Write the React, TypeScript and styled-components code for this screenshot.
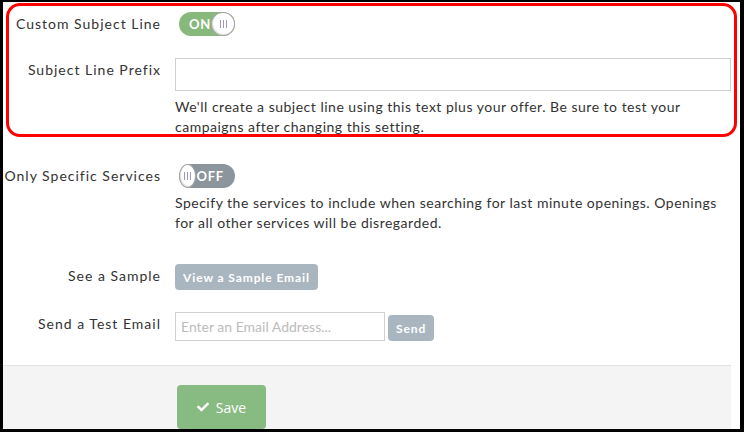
import React from 'react'
import styled, { createGlobalStyle } from 'styled-components'
import { FaCheck } from 'react-icons/fa'

const GlobalStyle = createGlobalStyle`
  html, body {
    margin: 0;
    padding: 0;
    background: #fff;
  }
  * {
    box-sizing: border-box;
  }
`

const Frame = styled.div`
  width: 744px;
  height: 432px;
  border-style: solid;
  border-color: #000;
  border-width: 2px 4px 3px 3px;
  background: #fff;
  padding-right: 9px;
  display: flex;
  flex-direction: column;
  overflow: hidden;
  font-family: Lato, "Noto Sans", sans-serif;
  color: #333;
`

const Highlight = styled.div`
  position: relative;
  padding-top: 10px;

  &::after {
    content: '';
    position: absolute;
    left: 3px;
    top: 1px;
    right: -6px;
    bottom: 0;
    border: 3px solid #f00;
    border-radius: 14px;
    pointer-events: none;
  }
`

const Row = styled.div<{ $top?: number }>`
  display: flex;
  align-items: flex-start;
  margin-top: ${p => p.$top ?? 0}px;
`

const Label = styled.div`
  width: 172px;
  flex-shrink: 0;
  padding-right: 14px;
  display: flex;
  justify-content: flex-end;
  white-space: nowrap;
  font-size: 14px;
  line-height: 24px;
  letter-spacing: 1px;
  color: #333;
`

const Control = styled.div<{ $row?: boolean }>`
  flex: 1;
  display: flex;
  flex-direction: ${p => (p.$row ? 'row' : 'column')};
  align-items: ${p => (p.$row ? 'flex-end' : 'stretch')};
  gap: ${p => (p.$row ? '3px' : '0')};
`

const Switch = styled.div<{ $on: boolean }>`
  width: 56px;
  height: 24px;
  margin-left: 4px;
  border-radius: 12px;
  background: ${p => (p.$on ? '#87b87c' : '#8b959b')};
  display: flex;
  align-items: center;
  flex-direction: ${p => (p.$on ? 'row' : 'row-reverse')};
  justify-content: ${p => (p.$on ? 'space-between' : 'flex-end')};
  padding-left: ${p => (p.$on ? '10px' : '0')};
  cursor: pointer;
`

const SwitchText = styled.span<{ $on: boolean }>`
  color: #fff;
  font-weight: 700;
  font-size: 13px;
  letter-spacing: 0.8px;
  margin-right: ${p => (p.$on ? '0' : '11px')};
`

const Knob = styled.span`
  width: 24px;
  height: 24px;
  border-radius: 50%;
  background: #fff;
  border: 1px solid rgba(0, 0, 0, 0.35);
  box-shadow: inset 1px -1px 1px rgba(0, 0, 0, 0.12);
  display: flex;
  align-items: center;
  justify-content: center;
  gap: 2px;
`

const Grip = styled.i`
  display: block;
  width: 1px;
  height: 8px;
  background: #9f9ab3;
`

const TextInput = styled.input<{ $w?: number; $h: number }>`
  width: ${p => (p.$w ? `${p.$w}px` : '100%')};
  height: ${p => p.$h}px;
  border: 1px solid #d0d0d0;
  border-radius: 0;
  padding: 0 5px;
  font-family: Lato, "Noto Sans", sans-serif;
  font-size: 14px;
  color: #333;
  outline: none;

  &::placeholder {
    color: #bcbcbc;
  }
`

const Help = styled.p<{ $top: number }>`
  margin: ${p => p.$top}px 0 0;
  font-size: 14px;
  line-height: 20px;
  letter-spacing: 0.5px;
  color: #333;
`

const GrayButton = styled.button`
  height: 26px;
  padding: 0 8px;
  border: none;
  border-radius: 4px;
  background: #a9b6bf;
  color: #fff;
  font-family: Lato, "Noto Sans", sans-serif;
  font-weight: 700;
  font-size: 12px;
  letter-spacing: 0.9px;
  cursor: pointer;
`

const Footer = styled.div`
  flex: 1;
  margin-top: 24px;
  border-top: 1px solid #e3e3e3;
  background: #f4f4f4;
  padding: 19px 0 0 174px;
`

const SaveButton = styled.button`
  width: 89px;
  height: 44px;
  border: none;
  border-radius: 4px;
  background: #88bb81;
  color: #fff;
  font-family: "Open Sans", Lato, sans-serif;
  font-size: 14px;
  display: flex;
  align-items: center;
  justify-content: center;
  gap: 7px;
  cursor: pointer;

  svg {
    width: 12px;
    height: 12px;
  }
`

const Toggle = ({ on }: { on: boolean }) => (
  <Switch $on={on}>
    <SwitchText $on={on}>{on ? 'ON' : 'OFF'}</SwitchText>
    <Knob>
      <Grip />
      <Grip />
      <Grip />
    </Knob>
  </Switch>
)

export default function App() {
  return (
    <Frame>
      <GlobalStyle />
      <Highlight>
        <Row>
          <Label><span>Custom Subject Line</span></Label>
          <Control>
            <Toggle on />
          </Control>
        </Row>
        <Row $top={22}>
          <Label><span>Subject Line Prefix</span></Label>
          <Control>
            <TextInput $h={33} />
            <Help $top={6}>
              We'll create a subject line using this text plus your offer. Be sure to test your
              campaigns after changing this setting.
            </Help>
          </Control>
        </Row>
      </Highlight>
      <Row $top={27}>
        <Label><span>Only Specific Services</span></Label>
        <Control>
          <Toggle on={false} />
          <Help $top={5}>
            Specify the services to include when searching for last minute openings. Openings
            for all other services will be disregarded.
          </Help>
        </Control>
      </Row>
      <Row $top={31}>
        <Label><span>See a Sample</span></Label>
        <Control $row>
          <GrayButton>View a Sample Email</GrayButton>
        </Control>
      </Row>
      <Row $top={22}>
        <Label><span>Send a Test Email</span></Label>
        <Control $row>
          <TextInput $w={210} $h={29} placeholder="Enter an Email Address..." />
          <GrayButton>Send</GrayButton>
        </Control>
      </Row>
      <Footer>
        <SaveButton>
          <FaCheck />
          Save
        </SaveButton>
      </Footer>
    </Frame>
  )
}
